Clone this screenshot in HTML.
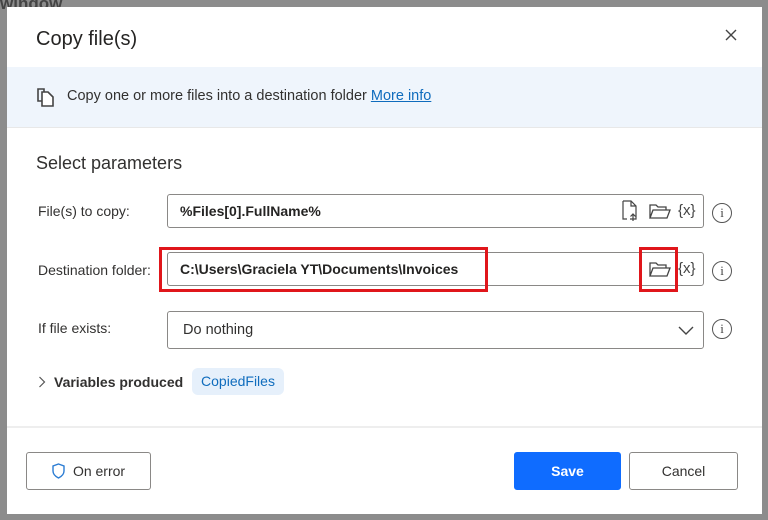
<!DOCTYPE html>
<html><head><style>
*{box-sizing:border-box;margin:0;padding:0}
body{width:768px;height:520px;background:#8c8c8c;position:relative;overflow:hidden;font-family:"Liberation Sans",sans-serif;color:#323130}
.bgtxt{position:absolute;left:0;top:-6px;font-size:17px;color:#444;font-weight:bold}
.dlg{position:absolute;left:7px;top:7px;width:755px;height:507px;background:#fff}
.abs{position:absolute}
.title{left:29px;top:21px;font-size:20px;color:#252423}
.close{left:716px;top:20px}
.info{left:0;top:60px;width:755px;height:60px;background:#eff5fc}
.info span{position:absolute;left:60px;top:21px;font-size:14.5px;color:#323130}
.info a{color:#0f6cbd;text-decoration:underline}
.sel{left:29px;top:146px;font-size:18px;color:#323130}
.lbl{font-size:14px;color:#323130}
.inp{border:1px solid #8a8886;border-radius:3px;background:#fff;left:160px;width:537px}
.inp b{position:absolute;left:12px;font-size:14px;color:#252423}
.red{border:3px solid #e0161b}
.iic{width:20px;height:20px;border:1.3px solid #555;border-radius:50%;font-size:13px;text-align:center;line-height:18px;color:#444;font-family:"Liberation Serif",serif}
.vx{font-size:15px;color:#444}
.btn{border:1px solid #8a8886;border-radius:3px;height:38px;font-size:14px;text-align:center;line-height:36px}
</style></head><body>
<div class="bgtxt">window</div>
<div class="dlg">
<div class="abs title">Copy file(s)</div>
<svg class="abs close" width="16" height="16" viewBox="0 0 16 16"><path d="M3 3L13 13M13 3L3 13" stroke="#444" stroke-width="1.4"/></svg>
<div class="abs info">
<svg class="abs" style="left:29px;top:19px" width="20" height="22" viewBox="0 0 20 22"><path d="M2 3h6v12H2z" fill="none" stroke="#444" stroke-width="1.6"/><path d="M6 6h6l5 5v9H6z" fill="#fff" stroke="#444" stroke-width="1.6"/></svg>
<span>Copy one or more files into a destination folder <a>More info</a></span></div>
<div class="abs" style="left:0;top:120px;width:755px;height:1px;background:#e8e8e8"></div>
<div class="abs sel">Select parameters</div>

<div class="abs lbl" style="left:31px;top:196px">File(s) to copy:</div>
<div class="abs inp" style="top:187px;height:34px"><b style="top:8px">%Files[0].FullName%</b>
<svg class="abs" style="left:453px;top:5px" width="18" height="22" viewBox="0 0 18 22"><path d="M2 1h8l5 5v13h-6M10 1v5h5M2 1v18h4" fill="none" stroke="#444" stroke-width="1.2"/><path d="M12 21v-7M9.5 16.5L12 14l2.5 2.5" fill="none" stroke="#444" stroke-width="1.2"/></svg>
<svg class="abs" style="left:481px;top:8px" width="22" height="17" viewBox="0 0 22 17"><path d="M1 15V2h6l2 2h8v3M1 15l3-8h17l-3 8z" fill="none" stroke="#444" stroke-width="1.3"/></svg>
<span class="abs vx" style="left:510px;top:7px">{x}</span></div>
<div class="abs iic" style="left:705px;top:196px">i</div>

<div class="abs lbl" style="left:31px;top:255px">Destination folder:</div>
<div class="abs inp" style="top:245px;height:34px"><b style="top:8px">C:\Users\Graciela YT\Documents\Invoices</b>
<svg class="abs" style="left:481px;top:8px" width="22" height="17" viewBox="0 0 22 17"><path d="M1 15V2h6l2 2h8v3M1 15l3-8h17l-3 8z" fill="none" stroke="#444" stroke-width="1.3"/></svg>
<span class="abs vx" style="left:510px;top:7px">{x}</span></div>
<div class="abs iic" style="left:705px;top:254px">i</div>
<div class="abs red" style="left:152px;top:240px;width:329px;height:45px"></div>
<div class="abs red" style="left:632px;top:240px;width:39px;height:45px"></div>

<div class="abs lbl" style="left:31px;top:313px">If file exists:</div>
<div class="abs inp" style="top:304px;height:38px"><span class="abs" style="left:15px;top:10px;font-size:14.5px">Do nothing</span>
<svg class="abs" style="left:510px;top:14px" width="16" height="10" viewBox="0 0 16 10"><path d="M1 1l7 7 7-7" fill="none" stroke="#444" stroke-width="1.4"/></svg></div>
<div class="abs iic" style="left:705px;top:312px">i</div>

<svg class="abs" style="left:31px;top:369px" width="8" height="12" viewBox="0 0 8 12"><path d="M1.5 1l5 5-5 5" fill="none" stroke="#555" stroke-width="1.2"/></svg>
<div class="abs" style="left:47px;top:367px;font-size:14px;font-weight:bold;color:#323130">Variables produced</div>
<div class="abs" style="left:185px;top:361px;width:92px;height:27px;background:#e6f0fb;border-radius:6px;color:#0f6cbd;font-size:14px;text-align:center;line-height:27px">CopiedFiles</div>

<div class="abs" style="left:0;top:419px;width:755px;height:2px;background:#eeeeee"></div>
<div class="abs btn" style="left:19px;top:445px;width:125px"><svg style="vertical-align:-3px;margin-right:8px" width="13" height="16" viewBox="0 0 13 16"><path d="M6.5 1L12 3v5c0 3.5-2.5 5.5-5.5 7C3.5 13.5 1 11.5 1 8V3z" fill="none" stroke="#2b7cd3" stroke-width="1.4"/></svg>On error</div>
<div class="abs btn" style="left:507px;top:445px;width:107px;background:#0f6cff;border-color:#0f6cff;color:#fff;font-weight:bold">Save</div>
<div class="abs btn" style="left:622px;top:445px;width:109px">Cancel</div>
</div>
</body></html>
